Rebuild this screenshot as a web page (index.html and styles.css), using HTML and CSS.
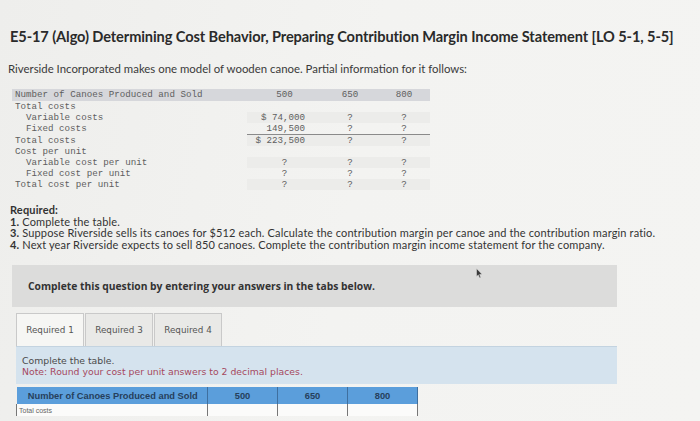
FILE: index.html
```html
<!DOCTYPE html>
<html>
<head>
<meta charset="utf-8">
<link rel="stylesheet" href="styles.css">
</head>
<body>
<div class="page">
  <h1 class="title">E5-17 (Algo) Determining Cost Behavior, Preparing Contribution Margin Income Statement [LO 5-1, 5-5]</h1>
  <p class="intro">Riverside Incorporated makes one model of wooden canoe. Partial information for it follows:</p>

  <table class="data">
    <thead>
      <tr><th class="lbl">Number of Canoes Produced and Sold</th><th class="c1">500</th><th class="c2">650</th><th class="c3">800</th></tr>
    </thead>
    <tbody>
      <tr><td class="lbl">Total costs</td><td></td><td></td><td></td></tr>
      <tr class="alt"><td class="lbl ind">Variable costs</td><td class="num">$ 74,000</td><td>?</td><td>?</td></tr>
      <tr><td class="lbl ind">Fixed costs</td><td class="num">149,500</td><td>?</td><td>?</td></tr>
      <tr class="alt sum"><td class="lbl">Total costs</td><td class="num">$ 223,500</td><td>?</td><td>?</td></tr>
      <tr><td class="lbl">Cost per unit</td><td></td><td></td><td></td></tr>
      <tr class="alt"><td class="lbl ind">Variable cost per unit</td><td>?</td><td>?</td><td>?</td></tr>
      <tr><td class="lbl ind">Fixed cost per unit</td><td>?</td><td>?</td><td>?</td></tr>
      <tr class="alt"><td class="lbl">Total cost per unit</td><td>?</td><td>?</td><td>?</td></tr>
    </tbody>
  </table>

  <div class="required">
    <div class="req-h">Required:</div>
    <div><b>1.</b> Complete the table.</div>
    <div><b>3.</b> Suppose Riverside sells its canoes for $512 each. Calculate the contribution margin per canoe and the contribution margin ratio.</div>
    <div><b>4.</b> Next year Riverside expects to sell 850 canoes. Complete the contribution margin income statement for the company.</div>
  </div>

  <div class="prompt">Complete this question by entering your answers in the tabs below.
    <svg class="cursor" width="7" height="11" viewBox="0 0 7 11"><path d="M0.5 0.5 L0.5 8.5 L2.3 6.9 L3.6 10 L4.8 9.5 L3.6 6.5 L6 6.3 Z" fill="#3a3a3a" stroke="#e0e0e0" stroke-width="0.5"/></svg>
  </div>

  <div class="tabs">
    <div class="tab active">Required 1</div>
    <div class="tab">Required 3</div>
    <div class="tab">Required 4</div>
  </div>
  <div class="instr">
    <div>Complete the table.</div>
    <div class="note">Note: Round your cost per unit answers to 2 decimal places.</div>
  </div>

  <table class="answer">
    <thead>
      <tr><th class="a0">Number of Canoes Produced and Sold</th><th>500</th><th>650</th><th>800</th></tr>
    </thead>
    <tbody>
      <tr><td class="a0">Total costs</td><td></td><td></td><td></td></tr>
    </tbody>
  </table>
</div>
</body>
</html>
```

FILE: styles.css
```css
html, body {
  margin: 0;
  padding: 0;
}
body {
  width: 700px;
  height: 421px;
  overflow: hidden;
  background: linear-gradient(100deg, #eeeeec 0%, #f3f3f1 50%, #f4f4f2 100%);
  font-family: "Lato", "Open Sans", sans-serif;
  color: #2b2b2b;
}
.page {
  padding: 28px 0 0 10px;
}
.title {
  margin: 0;
  font-size: 14.6px;
  line-height: 18px;
  font-weight: 700;
  color: #2a2a2a;
  letter-spacing: -0.1px;
}
.intro {
  margin: 16px 0 0 -2px;
  font-size: 11.4px;
  line-height: 14px;
  color: #3a3a3a;
}
.data {
  margin: 13px 0 0 2px;
  border-collapse: collapse;
  font-family: "Liberation Mono", monospace;
  font-size: 9.2px;
  color: #5e5e5e;
}
.data th, .data td {
  box-sizing: border-box;
  padding: 0;
  height: 11px;
  line-height: 11px;
  font-weight: 400;
  text-align: center;
}
.data thead th {
  background: #d6d7db;
  height: 12px;
  line-height: 12px;
}
.data .lbl {
  width: 235px;
  text-align: left;
  padding-left: 3px;
}
.data .ind {
  padding-left: 14px;
}
.data .c1 { width: 75px; }
.data .c2 { width: 56px; }
.data .c3 { width: 52px; }
.data td.num {
  text-align: right;
  padding-right: 17px;
}
.data tr.alt td:not(.lbl) {
  background: #ececea;
}
.data tr.sum td:not(.lbl) {
  border-top: 1px solid #8a8a8a;
}

.required {
  margin: 14px 0 0 0;
  font-size: 11px;
  letter-spacing: 0.15px;
  line-height: 11.5px;
  color: #333;
}
.required b, .req-h {
  font-weight: 700;
}
.prompt {
  position: relative;
  margin: 15px 0 0 2px;
  width: 589px;
  height: 42px;
  padding-left: 16px;
  display: flex;
  align-items: center;
  background: #dcdcdb;
  font-family: "Open Sans", sans-serif;
  font-weight: 700;
  font-size: 10.3px;
  color: #333;
}
.cursor {
  position: absolute;
  left: 464px;
  top: 3px;
}
.tabs {
  display: flex;
  margin: 6px 0 0 6px;
}
.tab {
  width: 66px;
  height: 32px;
  border: 1px solid #c9c9c9;
  border-bottom: none;
  margin-right: 1px;
  display: flex;
  align-items: center;
  justify-content: center;
  font-family: "DejaVu Sans", sans-serif;
  font-size: 8.8px;
  color: #555;
  background: #e9e9e7;
}
.tab.active {
  background: #f6f6f4;
}
.instr {
  margin-left: 6px;
  width: 601px;
  height: 38px;
  padding: 9px 0 0 6px;
  box-sizing: border-box;
  background: #d5e3ee;
  border-top: 1px solid #c3d3e0;
  font-family: "DejaVu Sans", sans-serif;
  font-size: 9.3px;
  line-height: 10.5px;
  color: #4a4a4a;
}
.instr .note {
  color: #a5485e;
}
.answer {
  margin: 3px 0 0 6px;
  border-collapse: collapse;
  font-family: "Liberation Sans", sans-serif;
  font-size: 9.3px;
}
.answer th {
  box-sizing: border-box;
  background: #5b9edb;
  color: #26405c;
  font-weight: 700;
  height: 17px;
  padding: 0;
  width: 70px;
  border-right: 1px solid #3f6f9f;
}
.answer th.a0 {
  width: 191px;
  padding-left: 2px;
}
.answer td {
  height: 12px;
  background: #fbfbfa;
  border-right: 1px solid #777;
  padding: 0;
  font-size: 7px;
  color: #666;
}
.answer td.a0 {
  border-left: 1px solid #777;
  padding-left: 2px;
}
```
